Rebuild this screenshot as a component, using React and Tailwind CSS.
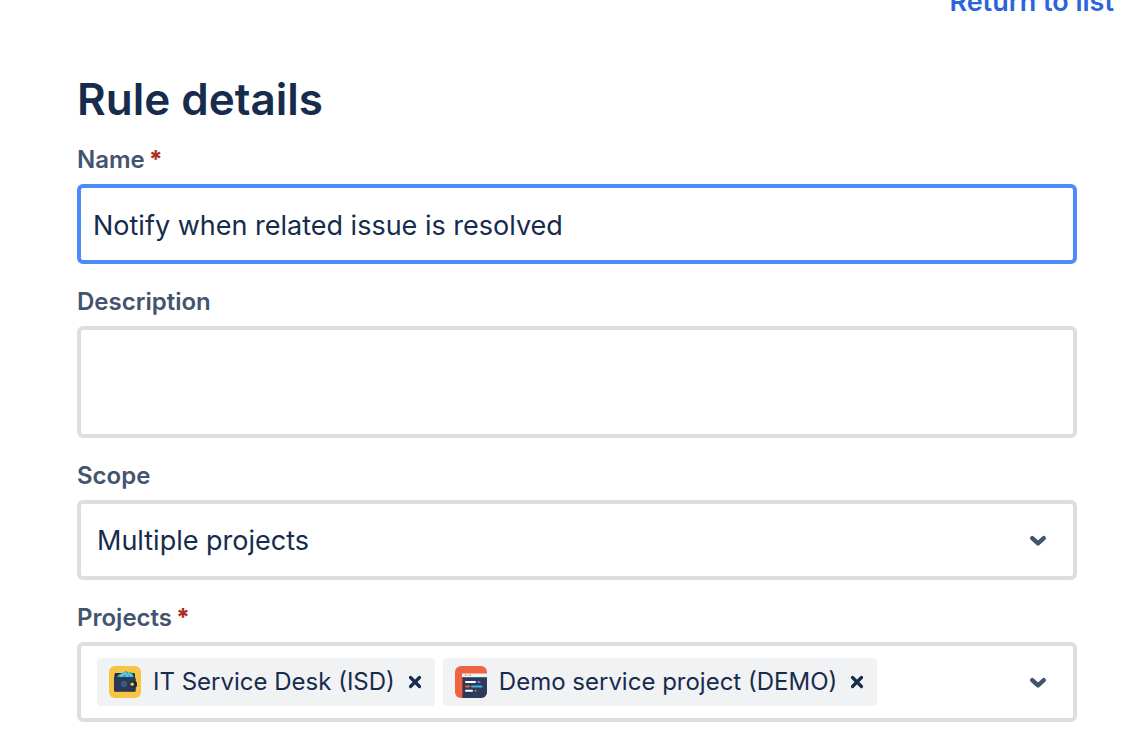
import { useState } from "react";

const fieldBorder = "w-full rounded-[6px] border-4 border-[#dddee4] bg-white";

function Label({ htmlFor, id, required, children }) {
  return (
    <label
      htmlFor={htmlFor}
      id={id}
      className="mb-[10px] flex gap-1 text-[24px] leading-7 font-semibold text-[#44546f]"
    >
      {children}
      {required && <span className="font-extrabold text-[#ae2e24]">*</span>}
    </label>
  );
}

function Chevron() {
  return (
    <svg width="24" height="24" viewBox="0 0 24 24" fill="none" aria-hidden="true">
      <path d="M6.200 10.200l5.800 5.200 5.800-5.200" stroke="#44546f" strokeWidth="4.400" strokeLinecap="round" strokeLinejoin="round" />
    </svg>
  );
}

function WalletIcon() {
  return (
    <svg width="32" height="32" viewBox="0 0 32 32" aria-hidden="true">
      <rect width="32" height="32" rx="6" fill="#f6c544" />
      <path d="M5.500 8.500C5.500 7.500 6 7 7 7H24.500c1 0 1.500.8 1.500 2v4H5.500z" fill="#1d2a47" />
      <path d="M8 11.500l1-2.500 6-3 2.500-1 1.500 1.500 3-.5 2 2.500 1 3z" fill="#35a7c8" />
      <path d="M11 10.500l5-3.500 3 3.500M19 7l4 3.500" stroke="#7fd3e6" strokeWidth="1.200" fill="none" />
      <path d="M5 10c0 1 .8 1.300 2 1.300h17.500c1.500 0 2.300.8 2.300 2V24c0 1.200-.8 2-2 2H7c-1.200 0-2-.8-2-2z" fill="#2a3858" />
      <path d="M5.200 25c.4.700 1 1 1.800 1h17.800c.8 0 1.500-.3 1.800-1z" fill="#554d4c" />
      <circle cx="15" cy="18" r="3.200" fill="#3b5585" />
      <rect x="21" y="15" width="7" height="6.500" rx="2.500" fill="#1d2a47" />
      <circle cx="23.200" cy="18.200" r="1.700" fill="#f6c544" />
    </svg>
  );
}

function BrowserIcon() {
  return (
    <svg width="32" height="32" viewBox="0 0 32 32" aria-hidden="true">
      <defs>
        <clipPath id="tile">
          <rect width="32" height="32" rx="6" />
        </clipPath>
      </defs>
      <g clipPath="url(#tile)">
        <rect width="32" height="32" fill="#ee6341" />
        <rect x="7" y="8" width="25" height="24" fill="#2b3a5b" />
        <rect x="7" y="7.500" width="25" height="3.700" fill="#f1f2f4" />
        <rect x="7" y="11.200" width="1" height="21" fill="#8a4140" />
        <circle cx="10.500" cy="9.300" r=".8" fill="#ee6341" />
        <circle cx="12.800" cy="9.300" r=".8" fill="#f6c544" />
        <circle cx="15.100" cy="9.300" r=".8" fill="#35a7c8" />
        <g strokeWidth="2" strokeLinecap="round">
          <path d="M11 16h9" stroke="#fff" />
          <path d="M23 16h1.500" stroke="#4688ec" />
          <path d="M11 20.500h3" stroke="#ee6341" />
          <path d="M17 20.500h9.500" stroke="#42b2d1" />
          <path d="M11 24.700h6" stroke="#fff" />
          <path d="M20.300 24.700h.5" stroke="#ee5341" />
        </g>
      </g>
    </svg>
  );
}

function Tag({ icon, name, onRemove }) {
  return (
    <li className="flex h-12 items-center rounded-[4px] bg-[#f1f2f4] pl-3 text-[24px] leading-8 text-[#172b4d]">
      {icon}
      <span className="ml-3 whitespace-nowrap">{name}</span>
      <button type="button" aria-label={`Remove ${name}`} onClick={onRemove} className="flex h-12 w-10 items-center justify-center">
        <svg width="16" height="16" viewBox="0 0 16 16" aria-hidden="true">
          <path d="M3.500 3.500l9 9M12.500 3.500l-9 9" stroke="#172b4d" strokeWidth="3.200" strokeLinecap="round" />
        </svg>
      </button>
    </li>
  );
}

const initialProjects = [
  { key: "ISD", name: "IT Service Desk (ISD)", icon: <WalletIcon /> },
  { key: "DEMO", name: "Demo service project (DEMO)", icon: <BrowserIcon /> },
];

export default function App() {
  const [projects, setProjects] = useState(initialProjects);

  return (
    <div className="overflow-hidden bg-white font-['Inter','Liberation_Sans',sans-serif] text-[#172b4d]">
      <header className="-mt-[14px] flex justify-end pr-6">
        <a href="#list" className="text-[27px] leading-8 font-semibold text-[#2b65dc]">
          Return to list
        </a>
      </header>

      <form className="mt-[53px] pr-[61px] pb-[22px] pl-[77px]" onSubmit={(e) => e.preventDefault()}>
        <h1 className="mb-[19px] text-[44px] leading-14 font-semibold">Rule details</h1>

        <div className="flex flex-col gap-6">
          <div>
            <Label htmlFor="name" required>Name</Label>
            <input
              id="name"
              type="text"
              required
              defaultValue="Notify when related issue is resolved"
              className="block h-20 w-full rounded-[6px] border-4 border-[#4c8bf9] bg-white px-3 pt-[2px] text-[27px] outline-none"
            />
          </div>

          <div>
            <Label htmlFor="description">Description</Label>
            <textarea id="description" className={`block h-28 resize-none p-3 text-[27px] outline-none ${fieldBorder}`} />
          </div>

          <div>
            <Label htmlFor="scope">Scope</Label>
            <div className="relative">
              <select id="scope" className={`block h-20 appearance-none px-4 pt-[2px] text-[27px] outline-none ${fieldBorder}`}>
                <option>Multiple projects</option>
                <option>Single project</option>
                <option>Global</option>
              </select>
              <span className="pointer-events-none absolute inset-y-0 right-[27px] flex items-center">
                <Chevron />
              </span>
            </div>
          </div>

          <div role="group" aria-labelledby="projects-label">
            <Label htmlFor="projects" id="projects-label" required>Projects</Label>
            <div className={`flex min-h-20 items-center justify-between pr-[23px] pl-4 ${fieldBorder}`}>
              <ul className="flex gap-2">
                {projects.map((p) => (
                  <Tag
                    key={p.key}
                    icon={p.icon}
                    name={p.name}
                    onRemove={() => setProjects(projects.filter((q) => q.key !== p.key))}
                  />
                ))}
              </ul>
              <button id="projects" type="button" aria-label="Choose projects">
                <Chevron />
              </button>
            </div>
          </div>
        </div>
      </form>
    </div>
  );
}
